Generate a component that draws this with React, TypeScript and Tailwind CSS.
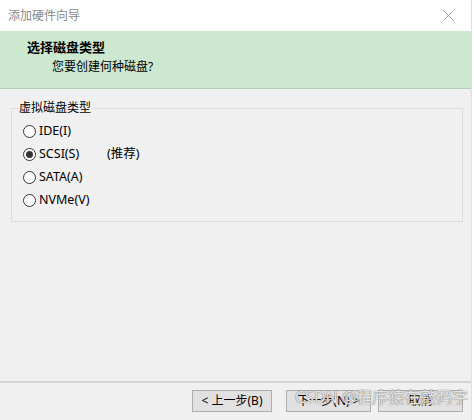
import React from 'react'

const font = "font-['Noto_Sans','Noto_Sans_CJK_SC',sans-serif]"

function Radio({ label, checked = false, note }: { label: string; checked?: boolean; note?: string }) {
  return (
    <div className="flex h-[23px] items-center">
      <span className="flex h-[13px] w-[13px] items-center justify-center rounded-full border border-[#333] bg-white">
        {checked && <span className="h-[7px] w-[7px] rounded-full bg-[#333]" />}
      </span>
      <span className="ml-[3px] w-[68px] text-[12.5px] text-black">{label}</span>
      {note && <span className="text-[12.5px] text-black">{note}</span>}
    </div>
  )
}

export default function App() {
  return (
    <div className={`relative flex h-[420px] w-[474px] bg-white ${font}`}>
      <div className="flex w-[472px] flex-col border-r border-[#e0e0e0]">
        {/* Title bar */}
        <div className="flex h-[31px] items-center justify-between bg-white pl-[8px] pr-[12px]">
          <span className="text-[12px] text-[#8a8a8a]">添加硬件向导</span>
          <svg width="11" height="11" viewBox="0 0 11 11" className="mr-[5px]">
            <path d="M0.5 0.5 L10.5 10.5 M10.5 0.5 L0.5 10.5" stroke="#9a9a9a" strokeWidth="1" fill="none" />
          </svg>
        </div>

        {/* Header */}
        <div className="flex h-[58px] flex-col border-b border-[#b4cdb7] bg-[#cce8cf] pl-[27px] pt-[6px]">
          <span className="text-[13px] font-bold leading-[20px] text-black">选择磁盘类型</span>
          <span className="pl-[25px] text-[12px] leading-[20px] text-black">您要创建何种磁盘?</span>
        </div>

        {/* Body */}
        <div className="flex flex-1 flex-col bg-[#f0f0f0] px-[11px] pt-[11px]">
          <fieldset className="m-0 h-[122px] w-[452px] border border-[#dcdcdc] pl-[11px] pt-0 pb-[9px]">
            <legend className="ml-[-5px] px-[1px] text-[12px] leading-[16px] text-black">虚拟磁盘类型</legend>
            <div className="flex flex-col pt-[4px]">
              <Radio label="IDE(I)" />
              <Radio label="SCSI(S)" checked note="(推荐)" />
              <Radio label="SATA(A)" />
              <Radio label="NVMe(V)" />
            </div>
          </fieldset>
        </div>

        {/* Footer */}
        <div className="flex h-[39px] items-start justify-end border-t-2 border-t-[#d4d4d4] bg-[#f0f0f0] pr-[8px] pt-[7px]">
          <button className="h-[22px] w-[80px] border border-[#adadad] bg-[#e1e1e1] text-[12px] text-black">&lt; 上一步(B)</button>
          <button className="ml-[14px] h-[22px] w-[85px] border border-[#adadad] bg-[#e1e1e1] text-[12px] text-black">下一步(N) &gt;</button>
          <button className="ml-[7px] h-[22px] w-[85px] border border-[#adadad] bg-[#e1e1e1] text-[12px] text-black">取消</button>
        </div>
      </div>

      {/* Watermark */}
      <span className="pointer-events-none absolute left-[295px] top-[385px] whitespace-nowrap text-[16px] leading-[24px] text-white/80 [text-shadow:0_0_1px_#777,0_0_1px_#777]">
        CSDN @程序猿在敲码字
      </span>
    </div>
  )
}
